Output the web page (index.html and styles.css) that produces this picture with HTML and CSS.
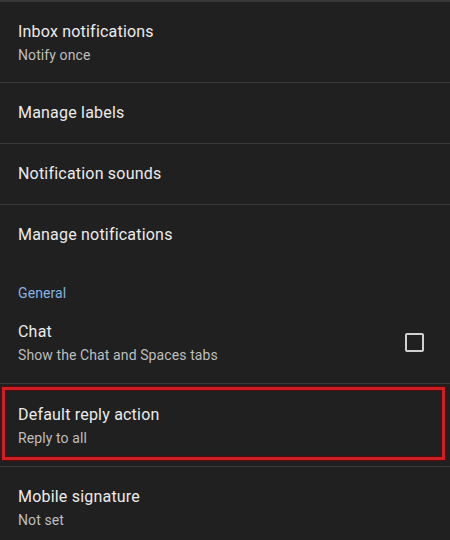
FILE: index.html
```html
<!DOCTYPE html>
<html>
<head>
<meta charset="utf-8">
<link rel="stylesheet" href="styles.css">
</head>
<body>
<div class="list">
  <div class="row two first divided">
    <div class="text">
      <div class="title">Inbox notifications</div>
      <div class="sub">Notify once</div>
    </div>
  </div>
  <div class="row one divided">
    <div class="text"><div class="title">Manage labels</div></div>
  </div>
  <div class="row one divided">
    <div class="text"><div class="title">Notification sounds</div></div>
  </div>
  <div class="row one">
    <div class="text"><div class="title">Manage notifications</div></div>
  </div>
  <div class="section">General</div>
  <div class="row chat divided">
    <div class="text">
      <div class="title">Chat</div>
      <div class="sub">Show the Chat and Spaces tabs</div>
    </div>
    <div class="checkbox"></div>
  </div>
  <div class="row reply divided">
    <div class="text">
      <div class="title">Default reply action</div>
      <div class="sub">Reply to all</div>
    </div>
    <div class="highlight"></div>
  </div>
  <div class="row two">
    <div class="text">
      <div class="title">Mobile signature</div>
      <div class="sub">Not set</div>
    </div>
  </div>
</div>
</body>
</html>
```
FILE: styles.css
```css
html, body {
  margin: 0;
  padding: 0;
  background: #202020;
}
body {
  width: 450px;
  height: 540px;
  overflow: hidden;
  font-family: Roboto, "Noto Sans", sans-serif;
}
.list {
  border-top: 2px solid #383838;
}
.row {
  display: flex;
  align-items: center;
  padding: 18px 26px 18px 18px;
  position: relative;
}
.row.first {
  padding-bottom: 17px;
}
.divided {
  border-bottom: 1px solid #3a3a3a;
}
.text {
  flex: 1;
}
.title {
  font-size: 16px;
  line-height: 24px;
  letter-spacing: 0.2px;
  color: #ebebeb;
}
.sub {
  margin-top: 1px;
  font-size: 14px;
  line-height: 20px;
  letter-spacing: 0.1px;
  color: #bdbdbd;
}
.section {
  padding: 18px 18px 0;
  font-size: 14px;
  line-height: 20px;
  letter-spacing: 0.1px;
  color: #86b2e2;
}
.row.chat {
  padding-top: 17px;
  padding-bottom: 18px;
}
.row.reply {
  padding-top: 19px;
  padding-bottom: 18px;
}
.checkbox {
  width: 15px;
  height: 15px;
  border: 2px solid #d0d0d0;
  border-radius: 2px;
}
.highlight {
  position: absolute;
  left: 2px;
  right: 5px;
  top: 3px;
  bottom: 6px;
  border: 3px solid #cf1f24;
  box-shadow: 0 0 1px 1px rgba(120, 0, 0, 0.6), inset 0 0 1px 1px rgba(120, 0, 0, 0.6);
}
```
